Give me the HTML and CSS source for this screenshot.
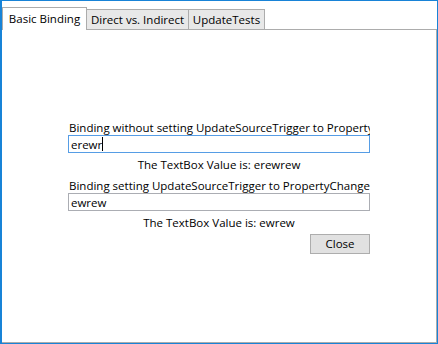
FILE: index.html
```html
<!DOCTYPE html>
<html lang="en">
<head>
	<meta charset="UTF-8" />
	<title>Binding Demo</title>
	<link rel="stylesheet" href="styles.css">
</head>
<body>
	<div class="window">
		<div class="tabs">
			<div class="tab tab--active">Basic Binding</div>
			<div class="tab tab--direct">Direct vs. Indirect</div>
			<div class="tab tab--update">UpdateTests</div>
		</div>
		<div class="panel">
			<div class="stack">
				<div class="label">Binding without setting UpdateSourceTrigger to PropertyChanged</div>
				<div class="textbox textbox--focused"><span>erewr</span><span class="caret"></span></div>
				<div class="value">The TextBox Value is: erewrew</div>
				<div class="label">Binding setting UpdateSourceTrigger to PropertyChanged</div>
				<div class="textbox"><span>ewrew</span></div>
				<div class="value">The TextBox Value is: ewrew</div>
				<div class="actions">
					<button class="button">Close</button>
				</div>
			</div>
		</div>
	</div>
</body>
</html>
```
FILE: styles.css
```css
*,
*:after,
*:before {
	box-sizing: border-box;
}

body {
	margin: 0;
	font-family: 'Open Sans', 'Noto Sans', sans-serif;
	font-size: 11.5px;
	color: #000;
	background: #fff;
}

.window {
	width: 438px;
	height: 344px;
	border: 1px solid #1883d7;
	border-left-width: 2px;
	display: flex;
	flex-direction: column;
	background: #fff;
}

.tabs {
	height: 22px;
	margin-top: 6px;
	display: flex;
	align-items: flex-end;
	position: relative;
	z-index: 1;
}

.tab {
	height: 20px;
	border: 1px solid #acacac;
	border-bottom: none;
	background: #e8e8e8;
	display: flex;
	align-items: center;
	justify-content: center;
	white-space: nowrap;
	margin-left: -1px;
	padding-bottom: 1px;
}

.tab--active {
	height: 23px;
	width: 85px;
	margin-left: 0;
	margin-bottom: -1px;
	background: #fff;
	position: relative;
	z-index: 2;
	padding-bottom: 2px;
}

.tab--direct {
	width: 103px;
}

.tab--update {
	width: 77px;
}

.panel {
	flex: 1;
	border-top: 1px solid #acacac;
	border-right: 1px solid #acacac;
	border-bottom: 1px solid #acacac;
	display: flex;
	align-items: center;
	justify-content: center;
	padding-top: 2px;
}

.stack {
	width: 302px;
	display: flex;
	flex-direction: column;
}

.label {
	line-height: 15px;
	height: 15px;
	padding-left: 1px;
	white-space: nowrap;
	overflow: hidden;
}

.textbox {
	height: 18px;
	border: 1px solid #abadb3;
	padding-left: 2px;
	display: flex;
	align-items: center;
	line-height: 15px;
}

.textbox--focused {
	border-color: #569de5;
}

.caret {
	width: 1px;
	height: 14px;
	background: #000;
}

.value {
	line-height: 16px;
	text-align: center;
	margin: 4px 0 5px;
}

.actions {
	display: flex;
	justify-content: flex-end;
	margin-top: -2px;
}

.button {
	width: 60px;
	height: 20px;
	border: 1px solid #adadad;
	background: #e1e1e1;
	font-family: inherit;
	font-size: 11.5px;
	color: #000;
	padding: 0 0 1px;
}
```
